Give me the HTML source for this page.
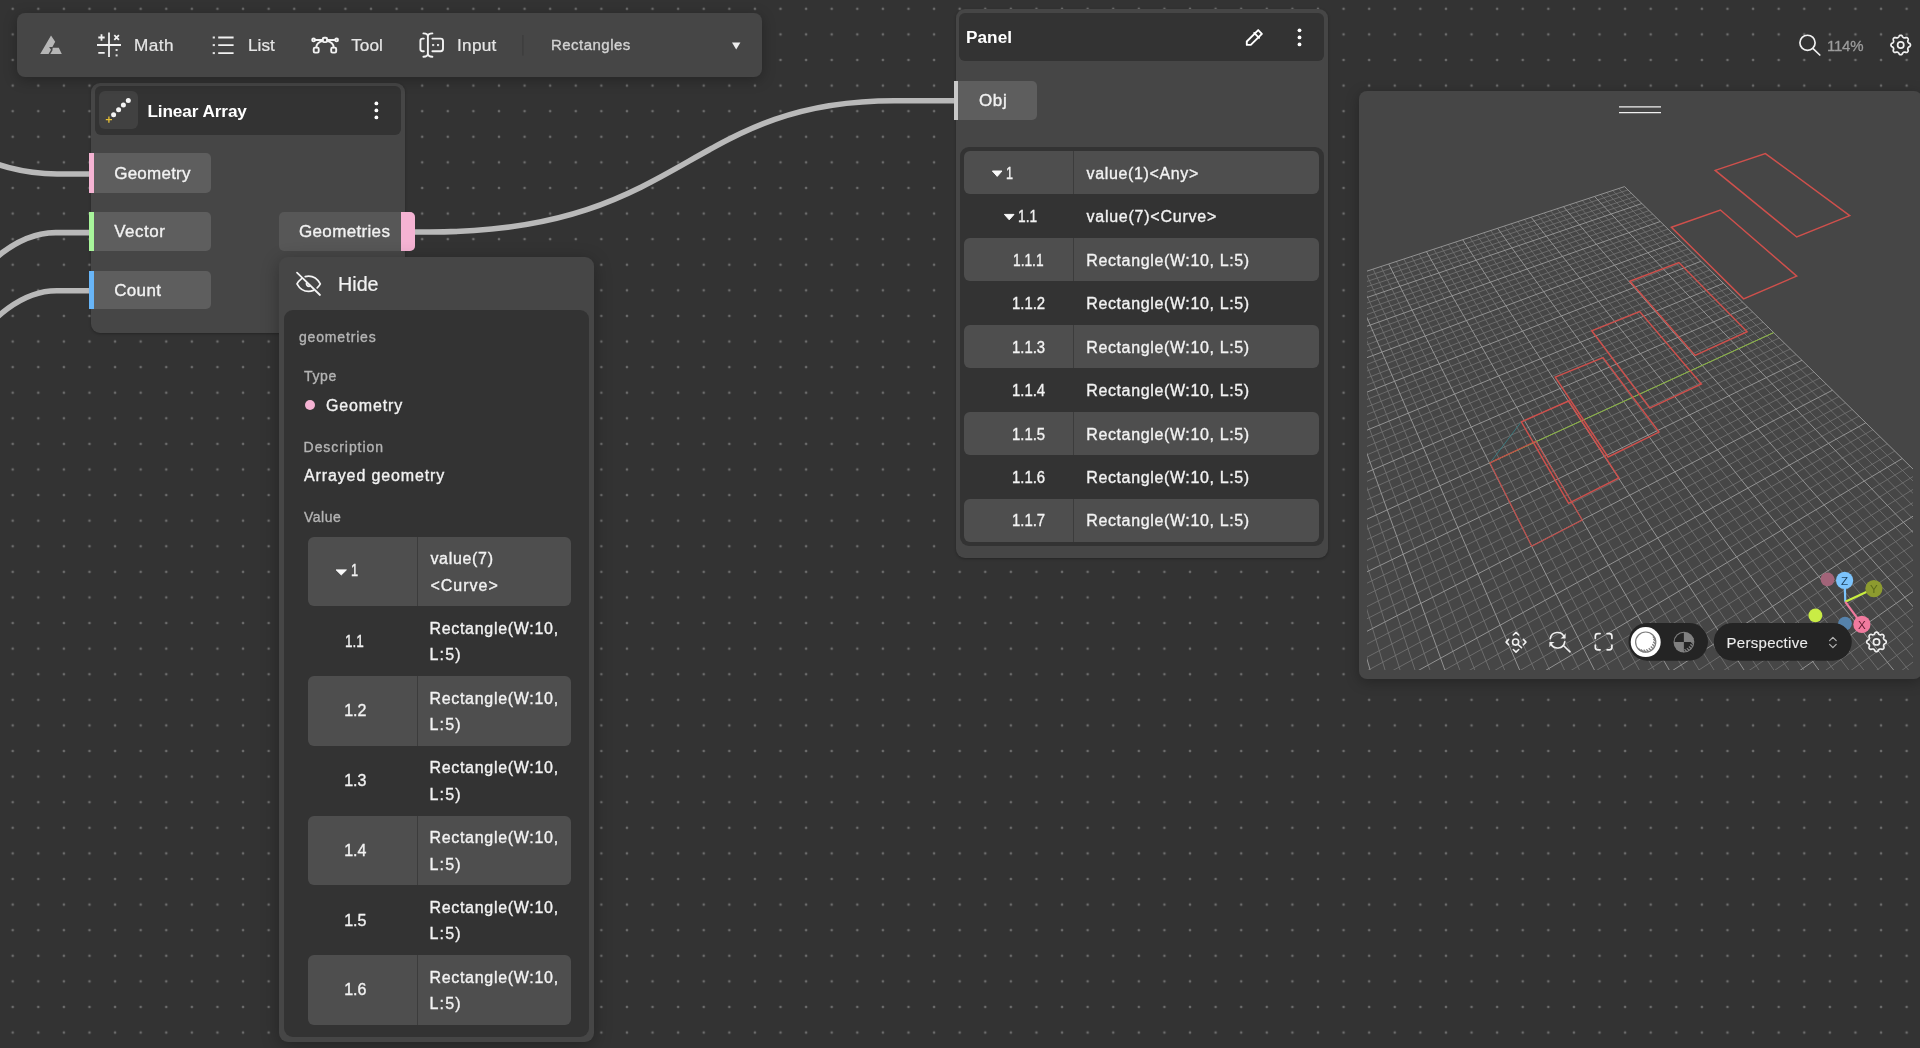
<!DOCTYPE html>
<html lang="en"><head><meta charset="utf-8"><title>Node editor</title>
<style>
html,body{margin:0;padding:0}
body{width:1920px;height:1048px;overflow:hidden;position:relative;background-color:#333333;
 background-image:radial-gradient(circle at 50% 50%, #6c6c6c 0, #6c6c6c 0.95px, rgba(108,108,108,0) 1.7px);
 background-size:25.6px 25.6px;background-position:-0.1px -4px;font-family:"Liberation Sans", sans-serif;}
.t{position:absolute;white-space:pre;line-height:1;font-family:"Liberation Sans", sans-serif;-webkit-text-stroke:0.35px currentColor;}
.abs{position:absolute}
.box{position:absolute;box-sizing:border-box}
.row{position:absolute;background:#4e4e4e;border-radius:6px}
.row i{position:absolute;top:0;bottom:0;width:1px;background:#3c3c3c}
svg{position:absolute;left:0;top:0;overflow:visible;will-change:transform}
</style></head><body>

<!-- wires -->
<svg width="1920" height="1048" viewBox="0 0 1920 1048" style="z-index:1">
 <g fill="none" stroke="#b9b9b9" stroke-width="5.6">
  <path d="M-40 148.6 Q 8.5 174 57 174 H92"/>
  <path d="M-40 297.1 Q 7.8 232.6 55.6 232.6 H92"/>
  <path d="M-40 360.6 Q 8.2 290.8 56.5 290.8 H92"/>
  <path d="M414 232 H429.8 C 685.6 232, 685.6 100.75, 894.3 100.75 H956"/>
 </g>
</svg>

<!-- top toolbar -->
<div class="box" style="left:17px;top:13px;width:745px;height:64px;border-radius:8px;background:#464646;box-shadow:0 3px 14px rgba(0,0,0,.28);z-index:5"></div>

<!-- node: Linear Array -->
<div class="box" style="left:91px;top:82.5px;width:313.8px;height:250.6px;border-radius:9px;background:#464646;box-shadow:0 1px 3px rgba(0,0,0,.28);z-index:2"></div>
<div class="box" style="left:94.8px;top:86.2px;width:306.2px;height:48.4px;border-radius:6px;background:#333333;z-index:2"></div>
<div class="box" style="left:99.2px;top:90.7px;width:38.6px;height:38.5px;border-radius:6px;background:#414141;z-index:2"></div>
<!-- ports -->
<div class="box" style="left:91px;top:153.3px;width:120px;height:39.6px;background:#5e5e5e;border-radius:0 5px 5px 0;z-index:3"></div>
<div class="box" style="left:89.1px;top:153.3px;width:5px;height:39.6px;background:#f5b3d3;z-index:3"></div>
<div class="box" style="left:91px;top:212px;width:120px;height:38.8px;background:#5e5e5e;border-radius:0 5px 5px 0;z-index:3"></div>
<div class="box" style="left:89.1px;top:212px;width:5px;height:38.8px;background:#a8f59b;z-index:3"></div>
<div class="box" style="left:91px;top:270.7px;width:120px;height:38.7px;background:#5e5e5e;border-radius:0 5px 5px 0;z-index:3"></div>
<div class="box" style="left:89.1px;top:270.7px;width:5px;height:38.7px;background:#68b5f7;z-index:3"></div>
<div class="box" style="left:279.4px;top:212px;width:135.8px;height:38.8px;background:#575757;border-radius:5px;z-index:3"></div>
<div class="box" style="left:401px;top:212px;width:14.2px;height:38.8px;background:#f5b3d3;border-radius:0 5px 5px 0;z-index:3"></div>

<!-- popover -->
<div class="box" style="left:279px;top:257.2px;width:314.7px;height:784.8px;border-radius:9px;background:#464646;box-shadow:0 4px 18px rgba(0,0,0,.3);z-index:6"></div>
<div class="box" style="left:283.8px;top:310.3px;width:305.7px;height:727.2px;border-radius:9px;background:#333333;z-index:6"></div>
<div class="box" style="left:304.5px;top:399.6px;width:10.1px;height:10.1px;border-radius:50%;background:#f5b3d3;z-index:7"></div>

<!-- panel -->
<div class="box" style="left:955.6px;top:9.2px;width:372px;height:549.2px;border-radius:9px;background:#464646;box-shadow:0 1px 3px rgba(0,0,0,.28);z-index:2"></div>
<div class="box" style="left:959.2px;top:12.6px;width:364.8px;height:48.8px;border-radius:6px;background:#333333;z-index:2"></div>
<div class="box" style="left:955px;top:80.6px;width:81.9px;height:39.1px;background:#5e5e5e;border-radius:0 5px 5px 0;z-index:3"></div>
<div class="box" style="left:953.7px;top:80.6px;width:4.7px;height:39.1px;background:#c9c9c9;z-index:3"></div>
<div class="box" style="left:959.5px;top:147px;width:364.7px;height:398.7px;border-radius:9px;background:#333333;z-index:2"></div>

<!-- viewport -->
<div class="box" style="left:1358.8px;top:90.8px;width:563.2px;height:588px;border-radius:8px;background:#464646;box-shadow:0 3px 14px rgba(0,0,0,.28);z-index:4"></div>
<svg width="1920" height="1048" viewBox="0 0 1920 1048" style="z-index:4">
 <defs><clipPath id="cv"><rect x="1367" y="99" width="546" height="571"/></clipPath></defs>
 <g clip-path="url(#cv)"><path d="M1073.4 373.3L1628.0 189.9M1083.9 364.0L1091.2 1309.3M1073.3 379.3L1631.4 193.3M1094.3 360.6L1115.1 1291.0M1073.3 385.4L1634.8 196.7M1104.5 357.2L1138.5 1273.1M1073.3 391.6L1638.3 200.1M1114.7 353.9L1161.4 1255.6M1073.2 404.4L1645.4 207.0M1134.8 347.3L1205.7 1221.8M1073.1 410.9L1649.1 210.6M1144.7 344.1L1227.1 1205.4M1073.1 417.6L1652.7 214.2M1154.5 340.8L1248.2 1189.3M1073.0 424.3L1656.5 217.8M1164.2 337.7L1268.7 1173.6M1072.9 438.2L1664.1 225.3M1183.3 331.4L1308.7 1143.1M1072.9 445.4L1667.9 229.1M1192.8 328.3L1328.1 1128.3M1072.8 452.6L1671.9 232.9M1202.2 325.2L1347.1 1113.7M1072.8 460.0L1675.8 236.8M1211.4 322.2L1365.7 1099.5M1072.7 475.3L1684.0 244.8M1229.7 316.1L1401.9 1071.9M1072.6 483.1L1688.1 248.8M1238.8 313.2L1419.5 1058.4M1072.6 491.1L1692.3 252.9M1247.7 310.3L1436.7 1045.2M1072.5 499.2L1696.6 257.1M1256.6 307.3L1453.7 1032.3M1072.4 516.0L1705.3 265.6M1274.1 301.6L1486.6 1007.1M1072.3 524.6L1709.7 270.0M1282.8 298.8L1502.7 994.9M1072.3 533.4L1714.2 274.4M1291.3 295.9L1518.4 982.8M1072.2 542.4L1718.8 278.8M1299.8 293.2L1533.9 971.0M1072.1 560.9L1728.1 288.0M1316.6 287.7L1564.0 948.0M1072.0 570.5L1732.9 292.6M1324.9 284.9L1578.7 936.8M1071.9 580.2L1737.7 297.4M1333.1 282.3L1593.1 925.8M1071.9 590.2L1742.6 302.2M1341.2 279.6L1607.2 915.0M1071.7 610.8L1752.7 312.0M1357.3 274.3L1634.9 893.8M1071.7 621.4L1757.8 317.1M1365.2 271.7L1648.4 883.5M1071.6 632.3L1763.0 322.2M1373.1 269.1L1661.6 873.4M1071.5 643.4L1768.3 327.4M1380.9 266.6L1674.7 863.5M1071.3 666.4L1779.2 338.0M1396.3 261.5L1700.1 844.0M1071.3 678.4L1784.7 343.4M1403.9 259.0L1712.5 834.5M1071.2 690.6L1790.4 348.9M1411.5 256.5L1724.8 825.2M1071.1 703.0L1796.1 354.6M1419.0 254.1L1736.8 816.0M1070.9 729.0L1807.8 366.1M1433.8 249.2L1760.3 798.0M1070.8 742.4L1813.9 372.0M1441.1 246.8L1771.8 789.2M1070.7 756.2L1820.0 377.9M1448.4 244.4L1783.1 780.6M1070.6 770.3L1826.2 384.0M1455.6 242.1L1794.3 772.1M1070.4 799.7L1839.0 396.5M1469.8 237.4L1816.1 755.4M1070.3 814.9L1845.5 402.9M1476.8 235.1L1826.7 747.3M1070.2 830.6L1852.2 409.5M1483.8 232.8L1837.2 739.3M1070.1 846.7L1858.9 416.1M1490.7 230.5L1847.6 731.3M1069.9 880.3L1872.9 429.7M1504.4 226.1L1867.8 715.9M1069.7 897.8L1880.0 436.7M1511.2 223.8L1877.7 708.3M1069.6 915.9L1887.3 443.8M1517.9 221.6L1887.5 700.8M1069.5 934.4L1894.7 451.1M1524.5 219.5L1897.1 693.5M1069.2 973.2L1909.9 466.0M1537.7 215.1L1916.0 679.1M1069.1 993.5L1917.7 473.7M1544.2 213.0L1925.3 672.0M1068.9 1014.4L1925.7 481.5M1550.7 210.9L1934.4 665.0M1068.8 1036.0L1933.9 489.4M1557.1 208.8L1943.4 658.2M1068.5 1081.2L1950.6 505.8M1569.8 204.6L1961.0 644.7M1068.3 1105.0L1959.2 514.3M1576.0 202.6L1969.6 638.1M1068.1 1129.6L1968.0 522.9M1582.3 200.5L1978.2 631.6M1067.9 1155.0L1977.0 531.6M1588.5 198.5L1986.6 625.1M1067.6 1208.5L1995.5 549.7M1600.7 194.5L2003.1 612.5M1067.4 1236.7L2005.0 559.1M1606.7 192.5L2011.2 606.4M1067.2 1266.0L2014.7 568.6M1612.7 190.5L2019.1 600.3M1067.0 1296.4L2024.7 578.3M1618.7 188.6L2027.0 594.2" stroke="#727272" stroke-width="0.85" fill="none"/><path d="M1073.4 367.4L1624.6 186.6M1073.4 367.4L1066.7 1327.9M1073.2 398.0L1641.9 203.5M1124.8 350.6L1183.7 1238.5M1073.0 431.2L1660.2 221.5M1173.8 334.5L1288.9 1158.2M1072.7 467.6L1679.9 240.8M1220.6 319.1L1384.0 1085.5M1072.4 507.5L1700.9 261.3M1265.4 304.5L1470.3 1019.6M1072.1 551.6L1723.4 283.4M1308.2 290.4L1549.1 959.4M1071.8 600.4L1747.6 307.1M1349.3 276.9L1621.2 904.3M1071.4 654.8L1773.7 332.6M1388.7 264.0L1687.5 853.7M1071.0 715.8L1801.9 360.3M1426.4 251.6L1748.7 806.9M1070.5 784.8L1832.5 390.2M1462.7 239.7L1805.3 763.7M1070.0 863.3L1865.8 422.8M1497.6 228.3L1857.8 723.6M1069.3 953.5L1902.2 458.5M1531.2 217.3L1906.6 686.2M1068.6 1058.2L1942.1 497.5M1563.5 206.7L1952.2 651.4M1067.8 1181.3L1986.1 540.6M1594.6 196.5L1994.9 618.8M1066.7 1327.9L2034.8 588.3M1624.6 186.6L2034.8 588.3" stroke="#979797" stroke-width="0.95" fill="none"/><line x1="1489.5" y1="463.0" x2="1773.7" y2="332.6" stroke="#88b63a" stroke-width="1"/><line x1="1490" y1="462.9" x2="1521.3" y2="421.8" stroke="#3b7f85" stroke-width="0.9"/><polygon points="1490.0,462.9 1535.6,441.3 1582.3,520.0 1531.8,546.2" fill="none" stroke="#c04d49" stroke-width="1.2"/><polygon points="1521.3,421.8 1568.6,401.0 1618.9,477.9 1568.6,503.4" fill="none" stroke="#cf504c" stroke-width="1.45"/><polygon points="1555.2,377.2 1603.0,357.6 1659.0,432.1 1608.1,457.0" fill="none" stroke="#cf504c" stroke-width="1.45"/><polygon points="1591.7,330.8 1639.7,311.6 1701.4,384.0 1649.8,408.1" fill="none" stroke="#cf504c" stroke-width="1.45"/><polygon points="1629.9,281.3 1678.9,262.5 1747.1,331.7 1695.1,355.4" fill="none" stroke="#cf504c" stroke-width="1.45"/><polygon points="1671.4,227.3 1720.4,210.0 1796.7,276.1 1743.6,298.8" fill="none" stroke="#cf504c" stroke-width="1.45"/><polygon points="1715.2,170.4 1765.4,153.6 1849.7,215.6 1796.7,237.0" fill="none" stroke="#cf504c" stroke-width="1.45"/></g>
 <path d="M1619 106.8H1661M1619 112.6H1661" stroke="#f0f0f0" stroke-width="1.3"/>
 <g stroke="#f0f0f0" stroke-width="1.6" fill="none" stroke-linecap="round" stroke-linejoin="round"><circle cx="1515.6" cy="642.1" r="3.05"/><path d="M1518 644.5L1521.5 647.7"/><path d="M1513.3 635L1516 632.4L1518.7 635M1513.3 649.5L1516 652.1L1518.7 649.5M1508.6 639.4L1506.1 642.1L1508.6 644.8M1523.4 639.4L1525.9 642.1L1523.4 644.8"/></g><g stroke="#f0f0f0" stroke-width="1.6" fill="none" stroke-linecap="round" stroke-linejoin="round"><path d="M1550.3 638.6A7.3 7.3 0 0 1 1564.3 637.2"/><path d="M1564.7 641.8A7.3 7.3 0 0 1 1550.7 643.4"/><path d="M1563.4 645.5L1570 651.8"/></g><g fill="#f0f0f0"><path d="M1565.6 633.2V638.4H1560.4L1563 636.6Z"/><path d="M1549.4 647.2V642H1554.6L1552 643.8Z"/></g><g stroke="#f0f0f0" stroke-width="1.7" fill="none" stroke-linecap="round" stroke-linejoin="round"><path d="M1595.3 638.4V636.2C1595.3 634.6 1596.3 633.6 1597.9 633.6H1600.1M1607.1 633.6H1609.3C1610.9 633.6 1611.9 634.6 1611.9 636.2V638.4M1611.9 645V647.2C1611.9 648.8 1610.9 649.8 1609.3 649.8H1607.1M1600.1 649.8H1597.9C1596.3 649.8 1595.3 648.8 1595.3 647.2V645"/></g><rect x="1628.5" y="622.9" width="79.5" height="37.8" rx="18.9" fill="#242424"/><circle cx="1645.7" cy="642.1" r="15" fill="#ffffff"/><circle cx="1645.7" cy="642.1" r="10.1" fill="none" stroke="#7c7c7c" stroke-width="1.2"/><path d="M1655.25 638.81L1652.87 636.44M1655.78 641.45L1653.40 639.07M1655.59 644.13L1653.22 641.75M1654.71 646.67L1652.33 644.29M1653.18 648.88L1650.81 646.51M1651.13 650.62L1648.75 648.24M1648.69 651.75L1646.31 649.37M1646.03 652.19L1643.66 649.82M1643.36 651.93L1640.98 649.55M1640.85 650.96L1638.47 648.58" stroke="#7c7c7c" stroke-width="1.3" fill="none"/><circle cx="1683.9" cy="642.1" r="10.4" fill="#808080"/><path d="M1683.9 642.1V632.8000000000001A9.3 9.3 0 0 0 1674.6000000000001 642.1Z" fill="#242424"/><path d="M1683.9 642.1V651.4A9.3 9.3 0 0 0 1693.2 642.1Z" fill="#242424"/><path d="M1693.36 638.84L1690.98 636.47M1693.88 641.45L1691.50 639.08M1693.70 644.11L1691.32 641.73M1692.82 646.62L1690.44 644.25M1691.31 648.82L1688.93 646.44M1689.27 650.53L1686.90 648.16M1686.86 651.65L1684.48 649.28M1684.23 652.09L1681.86 649.72M1681.58 651.83L1679.21 649.45M1679.10 650.87L1676.72 648.50" stroke="#808080" stroke-width="1.3" fill="none"/><circle cx="1827.5" cy="579.3" r="6.9" fill="#a26479"/><circle cx="1815.4" cy="615.3" r="6.9" fill="#c9ec45"/><circle cx="1845" cy="623.6" r="6.9" fill="#5582ab"/><path d="M1845.3 601.8L1844.6 580.4" stroke="#7cc3fb" stroke-width="2.2"/><path d="M1845.3 601.8L1873.9 588.6" stroke="#c9ee3f" stroke-width="2.2"/><path d="M1845.3 601.8L1861.9 624.4" stroke="#f07a9e" stroke-width="2.2"/><circle cx="1844.6" cy="580.4" r="8.6" fill="#7cc3fb"/><circle cx="1873.9" cy="588.6" r="8.6" fill="#8d9b2f"/><circle cx="1861.9" cy="624.4" r="8.6" fill="#f07a9e"/><g font-family="Liberation Sans, sans-serif" font-size="11.6" text-anchor="middle"><text x="1844.6" y="584.6" fill="#1d3f5c">Z</text><text x="1873.9" y="592.8" fill="#5c6a1c">Y</text><text x="1861.9" y="628.6" fill="#5e1c30">X</text></g><rect x="1713.8" y="622.9" width="138" height="37.9" rx="18.95" fill="#242424"/><path d="M1829.6 640.6L1832.9 637.4L1836.2 640.6M1829.6 644.4L1832.9 647.6L1836.2 644.4" stroke="#b0b0b0" stroke-width="1.3" fill="none" stroke-linecap="round" stroke-linejoin="round"/>
</svg>

<div style="position:absolute;left:0;top:0;width:1920px;height:1048px;z-index:8;will-change:transform">
<div class="row" style="left:307.9px;top:536.8px;width:263.1px;height:69.6px"><i style="left:109.2px"></i></div>
<div class="row" style="left:307.9px;top:676.2px;width:263.1px;height:69.6px"><i style="left:109.2px"></i></div>
<div class="row" style="left:307.9px;top:815.7px;width:263.1px;height:69.6px"><i style="left:109.2px"></i></div>
<div class="row" style="left:307.9px;top:955.1px;width:263.1px;height:69.6px"><i style="left:109.2px"></i></div>
<div class="row" style="left:963.6px;top:151.1px;width:355.4px;height:43.4px"><i style="left:109.6px"></i></div>
<div class="row" style="left:963.6px;top:237.9px;width:355.4px;height:43.4px"><i style="left:109.6px"></i></div>
<div class="row" style="left:963.6px;top:324.8px;width:355.4px;height:43.4px"><i style="left:109.6px"></i></div>
<div class="row" style="left:963.6px;top:411.6px;width:355.4px;height:43.4px"><i style="left:109.6px"></i></div>
<div class="row" style="left:963.6px;top:498.5px;width:355.4px;height:43.4px"><i style="left:109.6px"></i></div>
<span class="t" style="left:134.00px;top:37px;font-size:17.2px;color:#e6e6e6;font-weight:400;-webkit-text-stroke:0.22px currentColor;letter-spacing:0.483px">Math</span>
<span class="t" style="left:248.00px;top:37px;font-size:17.2px;color:#e6e6e6;font-weight:400;-webkit-text-stroke:0.22px currentColor;letter-spacing:0.010px">List</span>
<span class="t" style="left:351.20px;top:37px;font-size:17.2px;color:#e6e6e6;font-weight:400;-webkit-text-stroke:0.22px currentColor;letter-spacing:0.063px">Tool</span>
<span class="t" style="left:457.10px;top:37px;font-size:17.2px;color:#e6e6e6;font-weight:400;-webkit-text-stroke:0.22px currentColor;letter-spacing:0.237px">Input</span>
<span class="t" style="left:551.00px;top:37px;font-size:15.0px;color:#d2d2d2;font-weight:400;letter-spacing:0.473px">Rectangles</span>
<span class="t" style="left:147.40px;top:103px;font-size:17.2px;color:#ffffff;font-weight:700;-webkit-text-stroke:0;letter-spacing:-0.100px">Linear Array</span>
<span class="t" style="left:114.20px;top:165px;font-size:17.0px;color:#f2f2f2;font-weight:400;letter-spacing:0.238px">Geometry</span>
<span class="t" style="left:114.20px;top:223px;font-size:17.0px;color:#f2f2f2;font-weight:400;letter-spacing:0.493px">Vector</span>
<span class="t" style="left:114.20px;top:282px;font-size:17.0px;color:#f2f2f2;font-weight:400;letter-spacing:0.340px">Count</span>
<span class="t" style="left:299.00px;top:223px;font-size:17.0px;color:#f2f2f2;font-weight:400;letter-spacing:0.337px">Geometries</span>
<span class="t" style="left:337.64px;top:274px;font-size:20.6px;color:#f2f2f2;font-weight:400;-webkit-text-stroke:0.2px currentColor;letter-spacing:0.000px;transform:scaleX(0.9584);transform-origin:0 0">Hide</span>
<span class="t" style="left:299.00px;top:330px;font-size:14.0px;color:#b4b4b4;font-weight:400;letter-spacing:0.827px">geometries</span>
<span class="t" style="left:304.00px;top:369px;font-size:14.0px;color:#b4b4b4;font-weight:400;letter-spacing:0.612px">Type</span>
<span class="t" style="left:325.90px;top:398px;font-size:16.0px;color:#f2f2f2;font-weight:400;letter-spacing:0.865px">Geometry</span>
<span class="t" style="left:303.60px;top:440px;font-size:14.0px;color:#b4b4b4;font-weight:400;letter-spacing:0.936px">Description</span>
<span class="t" style="left:304.00px;top:468px;font-size:16.0px;color:#f2f2f2;font-weight:400;letter-spacing:0.876px">Arrayed geometry</span>
<span class="t" style="left:304.00px;top:510px;font-size:14.0px;color:#b4b4b4;font-weight:400;letter-spacing:0.505px">Value</span>
<span class="t" style="left:965.90px;top:29px;font-size:17.2px;color:#ffffff;font-weight:700;-webkit-text-stroke:0;letter-spacing:0.080px">Panel</span>
<span class="t" style="left:978.90px;top:92px;font-size:17.0px;color:#f2f2f2;font-weight:400;letter-spacing:0.711px">Obj</span>
<span class="t" style="left:1827.00px;top:38px;font-size:15.0px;color:#9c9c9c;font-weight:400;-webkit-text-stroke:0.3px currentColor;letter-spacing:-0.238px">114%</span>
<span class="t" style="left:1726.50px;top:635px;font-size:15.0px;color:#ececec;font-weight:400;-webkit-text-stroke:0.12px currentColor;letter-spacing:0.297px">Perspective</span>
<span class="t" style="left:350.80px;top:563px;font-size:16.0px;color:#f2f2f2;font-weight:400;letter-spacing:0.000px;transform:scaleX(0.8000);transform-origin:0 0">1</span>
<span class="t" style="left:430.40px;top:551px;font-size:16.0px;color:#f2f2f2;font-weight:400;letter-spacing:0.689px">value(7)</span>
<span class="t" style="left:430.40px;top:578px;font-size:16.0px;color:#f2f2f2;font-weight:400;letter-spacing:0.996px">&lt;Curve&gt;</span>
<span class="t" style="left:345.16px;top:634px;font-size:16.0px;color:#f2f2f2;font-weight:400;letter-spacing:0.000px;transform:scaleX(0.8433);transform-origin:0 0">1.1</span>
<span class="t" style="left:429.40px;top:621px;font-size:16.0px;color:#f2f2f2;font-weight:400;letter-spacing:0.705px">Rectangle(W:10,</span>
<span class="t" style="left:429.40px;top:647px;font-size:16.0px;color:#f2f2f2;font-weight:400;letter-spacing:1.219px">L:5)</span>
<span class="t" style="left:344.20px;top:703px;font-size:16.0px;color:#f2f2f2;font-weight:400;letter-spacing:-0.072px">1.2</span>
<span class="t" style="left:429.40px;top:691px;font-size:16.0px;color:#f2f2f2;font-weight:400;letter-spacing:0.705px">Rectangle(W:10,</span>
<span class="t" style="left:429.40px;top:717px;font-size:16.0px;color:#f2f2f2;font-weight:400;letter-spacing:1.219px">L:5)</span>
<span class="t" style="left:344.20px;top:773px;font-size:16.0px;color:#f2f2f2;font-weight:400;letter-spacing:-0.072px">1.3</span>
<span class="t" style="left:429.40px;top:760px;font-size:16.0px;color:#f2f2f2;font-weight:400;letter-spacing:0.705px">Rectangle(W:10,</span>
<span class="t" style="left:429.40px;top:787px;font-size:16.0px;color:#f2f2f2;font-weight:400;letter-spacing:1.219px">L:5)</span>
<span class="t" style="left:344.20px;top:843px;font-size:16.0px;color:#f2f2f2;font-weight:400;letter-spacing:-0.072px">1.4</span>
<span class="t" style="left:429.40px;top:830px;font-size:16.0px;color:#f2f2f2;font-weight:400;letter-spacing:0.705px">Rectangle(W:10,</span>
<span class="t" style="left:429.40px;top:857px;font-size:16.0px;color:#f2f2f2;font-weight:400;letter-spacing:1.219px">L:5)</span>
<span class="t" style="left:344.20px;top:913px;font-size:16.0px;color:#f2f2f2;font-weight:400;letter-spacing:-0.072px">1.5</span>
<span class="t" style="left:429.40px;top:900px;font-size:16.0px;color:#f2f2f2;font-weight:400;letter-spacing:0.705px">Rectangle(W:10,</span>
<span class="t" style="left:429.40px;top:926px;font-size:16.0px;color:#f2f2f2;font-weight:400;letter-spacing:1.219px">L:5)</span>
<span class="t" style="left:344.20px;top:982px;font-size:16.0px;color:#f2f2f2;font-weight:400;letter-spacing:-0.072px">1.6</span>
<span class="t" style="left:429.40px;top:970px;font-size:16.0px;color:#f2f2f2;font-weight:400;letter-spacing:0.705px">Rectangle(W:10,</span>
<span class="t" style="left:429.40px;top:996px;font-size:16.0px;color:#f2f2f2;font-weight:400;letter-spacing:1.219px">L:5)</span>
<span class="t" style="left:1006.21px;top:166px;font-size:16.0px;color:#f2f2f2;font-weight:400;letter-spacing:0.000px;transform:scaleX(0.7875);transform-origin:0 0">1</span>
<span class="t" style="left:1086.50px;top:166px;font-size:16.0px;color:#f2f2f2;font-weight:400;letter-spacing:0.648px">value(1)&lt;Any&gt;</span>
<span class="t" style="left:1018.14px;top:209px;font-size:16.0px;color:#f2f2f2;font-weight:400;letter-spacing:0.000px;transform:scaleX(0.8574);transform-origin:0 0">1.1</span>
<span class="t" style="left:1086.50px;top:209px;font-size:16.0px;color:#f2f2f2;font-weight:400;letter-spacing:0.755px">value(7)&lt;Curve&gt;</span>
<span class="t" style="left:1012.54px;top:253px;font-size:16.0px;color:#f2f2f2;font-weight:400;letter-spacing:0.000px;transform:scaleX(0.8591);transform-origin:0 0">1.1.1</span>
<span class="t" style="left:1086.20px;top:253px;font-size:16.0px;color:#f2f2f2;font-weight:400;letter-spacing:0.634px">Rectangle(W:10, L:5)</span>
<span class="t" style="left:1012.47px;top:296px;font-size:16.0px;color:#f2f2f2;font-weight:400;letter-spacing:0.000px;transform:scaleX(0.9312);transform-origin:0 0">1.1.2</span>
<span class="t" style="left:1086.20px;top:296px;font-size:16.0px;color:#f2f2f2;font-weight:400;letter-spacing:0.634px">Rectangle(W:10, L:5)</span>
<span class="t" style="left:1012.47px;top:340px;font-size:16.0px;color:#f2f2f2;font-weight:400;letter-spacing:0.000px;transform:scaleX(0.9312);transform-origin:0 0">1.1.3</span>
<span class="t" style="left:1086.20px;top:340px;font-size:16.0px;color:#f2f2f2;font-weight:400;letter-spacing:0.634px">Rectangle(W:10, L:5)</span>
<span class="t" style="left:1012.47px;top:383px;font-size:16.0px;color:#f2f2f2;font-weight:400;letter-spacing:0.000px;transform:scaleX(0.9312);transform-origin:0 0">1.1.4</span>
<span class="t" style="left:1086.20px;top:383px;font-size:16.0px;color:#f2f2f2;font-weight:400;letter-spacing:0.634px">Rectangle(W:10, L:5)</span>
<span class="t" style="left:1012.47px;top:427px;font-size:16.0px;color:#f2f2f2;font-weight:400;letter-spacing:0.000px;transform:scaleX(0.9312);transform-origin:0 0">1.1.5</span>
<span class="t" style="left:1086.20px;top:427px;font-size:16.0px;color:#f2f2f2;font-weight:400;letter-spacing:0.634px">Rectangle(W:10, L:5)</span>
<span class="t" style="left:1012.47px;top:470px;font-size:16.0px;color:#f2f2f2;font-weight:400;letter-spacing:0.000px;transform:scaleX(0.9312);transform-origin:0 0">1.1.6</span>
<span class="t" style="left:1086.20px;top:470px;font-size:16.0px;color:#f2f2f2;font-weight:400;letter-spacing:0.634px">Rectangle(W:10, L:5)</span>
<span class="t" style="left:1012.47px;top:513px;font-size:16.0px;color:#f2f2f2;font-weight:400;letter-spacing:0.000px;transform:scaleX(0.9312);transform-origin:0 0">1.1.7</span>
<span class="t" style="left:1086.20px;top:513px;font-size:16.0px;color:#f2f2f2;font-weight:400;letter-spacing:0.634px">Rectangle(W:10, L:5)</span>
</div>

<!-- icons -->
<svg width="1920" height="1048" viewBox="0 0 1920 1048" style="z-index:9">
 <g fill="#b6b6b6"><path d="M51 35.5L55.2 41.7L52.4 46.9H49.1L51 49.8L48.5 53.9H40.2Z"/><path d="M52.7 47.7H58.8L61.8 53.9H50.3L52.4 50.4Z"/></g><g stroke="#f2f2f2" stroke-width="1.8" fill="none"><path d="M109 32.6V57.1M97 45H121M98.3 37.5H104.7M101.5 34.3V40.7M114.3 35.2L118.9 39.8M118.9 35.2L114.3 39.8M98.3 52.8H104.7"/></g><g fill="#e2e2e2"><rect x="115.6" y="49" width="2" height="2"/><rect x="115.6" y="54.4" width="2" height="2"/></g><g stroke="#f2f2f2" stroke-width="1.8" fill="none"><path d="M218.2 37.5H233.6M218.2 45.1H233.6M218.2 53.1H233.6"/></g><g fill="#e2e2e2"><rect x="212.7" y="36.5" width="2.2" height="2"/><rect x="212.7" y="44.1" width="2.2" height="2"/><rect x="212.7" y="52.1" width="2.2" height="2"/></g><g stroke="#f2f2f2" stroke-width="1.9" fill="none" stroke-linecap="round"><rect x="322.8" y="37.8" width="4.3" height="4.3" rx="1.2"/><circle cx="313.6" cy="39.95" r="1.4"/><circle cx="336.6" cy="39.95" r="1.4"/><path d="M315.2 39.95H322.6M327.3 39.95H335"/><rect x="313.7" y="47.6" width="5" height="5" rx="1.3"/><rect x="331.2" y="47.6" width="5" height="5" rx="1.3"/><path d="M322.6 40.9C318.8 42 316.4 44.2 316.3 47.4M327.4 40.9C331.2 42 333.6 44.2 333.7 47.4"/></g><g stroke="#f2f2f2" stroke-width="1.9" fill="none" stroke-linecap="round" stroke-linejoin="round"><path d="M423.4 33.4C425.8 33.4 427.9 34.6 427.9 36.6V53.5C427.9 55.5 425.8 56.7 423.4 56.7M432.4 33.4C430 33.4 427.9 34.6 427.9 36.6M427.9 53.5C427.9 55.5 430 56.7 432.4 56.7"/><path d="M423.8 38.6H422.6C421.3 38.6 420.4 39.5 420.4 40.8V49C420.4 50.3 421.3 51.2 422.6 51.2H423.8"/><path d="M432.4 38.6H440.6C442 38.6 443 39.6 443 41V48.8C443 50.2 442 51.2 440.6 51.2H432.4"/></g><g fill="#dcdcdc"><rect x="432.1" y="44" width="2.1" height="2.1"/><rect x="437" y="44" width="2.1" height="2.1"/></g><path d="M522.9 35V55.6" stroke="#3b3b3b" stroke-width="1.2"/><path d="M732 42.4H740.4L736.2 49.5Z" fill="#ededed"/><g fill="#f4f4f4"><circle cx="128.3" cy="100.4" r="2.5"/><circle cx="123.4" cy="105.1" r="2.5"/><circle cx="118.6" cy="109.8" r="2.5"/><circle cx="113.6" cy="114.8" r="2.5"/></g><path d="M105.8 119.7H112M108.9 116.6V122.8" stroke="#e6bf35" stroke-width="1.3" fill="none"/><g fill="#ffffff"><circle cx="376.4" cy="103.4" r="1.9"/><circle cx="376.4" cy="110.4" r="1.9"/><circle cx="376.4" cy="117.4" r="1.9"/><circle cx="1299.5" cy="30.3" r="1.9"/><circle cx="1299.5" cy="37.4" r="1.9"/><circle cx="1299.5" cy="44.4" r="1.9"/></g><g stroke="#ffffff" stroke-width="1.9" fill="none" stroke-linejoin="round" stroke-linecap="round"><path d="M1258.2 30.1L1261.9 33.8L1250.8 44.9L1246.8 44.9L1246.8 41.5Z"/><path d="M1254.2 32.9L1259.1 37.8"/></g><g stroke="#f0f0f0" stroke-width="1.7" fill="none" stroke-linecap="round"><circle cx="1807.5" cy="42.85" r="7.6"/><path d="M1813.1 48.7L1819.8 55"/></g><path d="M336.2 569.9H346.4L341.3 574.9Z" fill="#fafafa" stroke="#fafafa" stroke-width="1" stroke-linejoin="round"/><path d="M992.4 171.0H1002.0L997.2 176.4Z" fill="#fafafa" stroke="#fafafa" stroke-width="1" stroke-linejoin="round"/><path d="M1004.4 214.4H1014.0L1009.2 219.8Z" fill="#fafafa" stroke="#fafafa" stroke-width="1" stroke-linejoin="round"/><g stroke="#f4f4f4" stroke-width="1.75" fill="none" stroke-linecap="round" stroke-linejoin="round"><path d="M297 272.6L320 295"/><path d="M301.6 278.6C299.6 280.2 298 282 297 283.8C299.4 288.2 303.6 291.4 308.6 291.4C310.4 291.4 312 291 313.4 290.4"/><path d="M305.2 276.6C306.3 276.3 307.4 276.1 308.6 276.1C313.6 276.1 317.8 279.3 320.3 283.8C319.5 285.3 318.4 286.7 317.2 287.9"/><path d="M306.5 283.2C306.3 284.8 307.4 286.3 309.2 286.4"/></g>
 <path d="M1900.70 35.25L1901.04 35.28L1901.37 35.37L1901.70 35.52L1902.00 35.74L1902.28 36.03L1902.48 36.61L1902.71 36.95L1902.93 37.21L1903.16 37.42L1903.40 37.59L1903.64 37.72L1903.90 37.82L1904.17 37.88L1904.47 37.91L1904.80 37.90L1905.16 37.86L1905.68 37.62L1906.13 37.52L1906.52 37.55L1906.87 37.65L1907.19 37.79L1907.47 37.99L1907.71 38.23L1907.91 38.51L1908.05 38.83L1908.15 39.18L1908.18 39.57L1908.08 40.02L1907.84 40.54L1907.80 40.90L1907.79 41.23L1907.82 41.53L1907.88 41.80L1907.98 42.06L1908.11 42.30L1908.28 42.54L1908.49 42.77L1908.75 42.99L1909.09 43.22L1909.67 43.42L1909.96 43.70L1910.18 44.00L1910.33 44.33L1910.42 44.66L1910.45 45.00L1910.42 45.34L1910.33 45.67L1910.18 46.00L1909.96 46.30L1909.67 46.58L1909.09 46.78L1908.75 47.01L1908.49 47.23L1908.28 47.46L1908.11 47.70L1907.98 47.94L1907.88 48.20L1907.82 48.47L1907.79 48.77L1907.80 49.10L1907.84 49.46L1908.08 49.98L1908.18 50.43L1908.15 50.82L1908.05 51.17L1907.91 51.49L1907.71 51.77L1907.47 52.01L1907.19 52.21L1906.87 52.35L1906.52 52.45L1906.13 52.48L1905.68 52.38L1905.16 52.14L1904.80 52.10L1904.47 52.09L1904.17 52.12L1903.90 52.18L1903.64 52.28L1903.40 52.41L1903.16 52.58L1902.93 52.79L1902.71 53.05L1902.48 53.39L1902.28 53.97L1902.00 54.26L1901.70 54.48L1901.37 54.63L1901.04 54.72L1900.70 54.75L1900.36 54.72L1900.03 54.63L1899.70 54.48L1899.40 54.26L1899.12 53.97L1898.92 53.39L1898.69 53.05L1898.47 52.79L1898.24 52.58L1898.00 52.41L1897.76 52.28L1897.50 52.18L1897.23 52.12L1896.93 52.09L1896.60 52.10L1896.24 52.14L1895.72 52.38L1895.27 52.48L1894.88 52.45L1894.53 52.35L1894.21 52.21L1893.93 52.01L1893.69 51.77L1893.49 51.49L1893.35 51.17L1893.25 50.82L1893.22 50.43L1893.32 49.98L1893.56 49.46L1893.60 49.10L1893.61 48.77L1893.58 48.47L1893.52 48.20L1893.42 47.94L1893.29 47.70L1893.12 47.46L1892.91 47.23L1892.65 47.01L1892.31 46.78L1891.73 46.58L1891.44 46.30L1891.22 46.00L1891.07 45.67L1890.98 45.34L1890.95 45.00L1890.98 44.66L1891.07 44.33L1891.22 44.00L1891.44 43.70L1891.73 43.42L1892.31 43.22L1892.65 42.99L1892.91 42.77L1893.12 42.54L1893.29 42.30L1893.42 42.06L1893.52 41.80L1893.58 41.53L1893.61 41.23L1893.60 40.90L1893.56 40.54L1893.32 40.02L1893.22 39.57L1893.25 39.18L1893.35 38.83L1893.49 38.51L1893.69 38.23L1893.93 37.99L1894.21 37.79L1894.53 37.65L1894.88 37.55L1895.27 37.52L1895.72 37.62L1896.24 37.86L1896.60 37.90L1896.93 37.91L1897.23 37.88L1897.50 37.82L1897.76 37.72L1898.00 37.59L1898.24 37.42L1898.47 37.21L1898.69 36.95L1898.92 36.61L1899.12 36.03L1899.40 35.74L1899.70 35.52L1900.03 35.37L1900.36 35.28Z" fill="none" stroke="#f0f0f0" stroke-width="1.7" stroke-linejoin="round"/><circle cx="1900.7" cy="45.0" r="3.1" fill="none" stroke="#f0f0f0" stroke-width="1.7"/>
 <path d="M1876.50 632.15L1876.84 632.18L1877.17 632.27L1877.50 632.42L1877.80 632.64L1878.08 632.93L1878.28 633.51L1878.51 633.85L1878.73 634.11L1878.96 634.32L1879.20 634.49L1879.44 634.62L1879.70 634.72L1879.97 634.78L1880.27 634.81L1880.60 634.80L1880.96 634.76L1881.48 634.52L1881.93 634.42L1882.32 634.45L1882.67 634.55L1882.99 634.69L1883.27 634.89L1883.51 635.13L1883.71 635.41L1883.85 635.73L1883.95 636.08L1883.98 636.47L1883.88 636.92L1883.64 637.44L1883.60 637.80L1883.59 638.13L1883.62 638.43L1883.68 638.70L1883.78 638.96L1883.91 639.20L1884.08 639.44L1884.29 639.67L1884.55 639.89L1884.89 640.12L1885.47 640.32L1885.76 640.60L1885.98 640.90L1886.13 641.23L1886.22 641.56L1886.25 641.90L1886.22 642.24L1886.13 642.57L1885.98 642.90L1885.76 643.20L1885.47 643.48L1884.89 643.68L1884.55 643.91L1884.29 644.13L1884.08 644.36L1883.91 644.60L1883.78 644.84L1883.68 645.10L1883.62 645.37L1883.59 645.67L1883.60 646.00L1883.64 646.36L1883.88 646.88L1883.98 647.33L1883.95 647.72L1883.85 648.07L1883.71 648.39L1883.51 648.67L1883.27 648.91L1882.99 649.11L1882.67 649.25L1882.32 649.35L1881.93 649.38L1881.48 649.28L1880.96 649.04L1880.60 649.00L1880.27 648.99L1879.97 649.02L1879.70 649.08L1879.44 649.18L1879.20 649.31L1878.96 649.48L1878.73 649.69L1878.51 649.95L1878.28 650.29L1878.08 650.87L1877.80 651.16L1877.50 651.38L1877.17 651.53L1876.84 651.62L1876.50 651.65L1876.16 651.62L1875.83 651.53L1875.50 651.38L1875.20 651.16L1874.92 650.87L1874.72 650.29L1874.49 649.95L1874.27 649.69L1874.04 649.48L1873.80 649.31L1873.56 649.18L1873.30 649.08L1873.03 649.02L1872.73 648.99L1872.40 649.00L1872.04 649.04L1871.52 649.28L1871.07 649.38L1870.68 649.35L1870.33 649.25L1870.01 649.11L1869.73 648.91L1869.49 648.67L1869.29 648.39L1869.15 648.07L1869.05 647.72L1869.02 647.33L1869.12 646.88L1869.36 646.36L1869.40 646.00L1869.41 645.67L1869.38 645.37L1869.32 645.10L1869.22 644.84L1869.09 644.60L1868.92 644.36L1868.71 644.13L1868.45 643.91L1868.11 643.68L1867.53 643.48L1867.24 643.20L1867.02 642.90L1866.87 642.57L1866.78 642.24L1866.75 641.90L1866.78 641.56L1866.87 641.23L1867.02 640.90L1867.24 640.60L1867.53 640.32L1868.11 640.12L1868.45 639.89L1868.71 639.67L1868.92 639.44L1869.09 639.20L1869.22 638.96L1869.32 638.70L1869.38 638.43L1869.41 638.13L1869.40 637.80L1869.36 637.44L1869.12 636.92L1869.02 636.47L1869.05 636.08L1869.15 635.73L1869.29 635.41L1869.49 635.13L1869.73 634.89L1870.01 634.69L1870.33 634.55L1870.68 634.45L1871.07 634.42L1871.52 634.52L1872.04 634.76L1872.40 634.80L1872.73 634.81L1873.03 634.78L1873.30 634.72L1873.56 634.62L1873.80 634.49L1874.04 634.32L1874.27 634.11L1874.49 633.85L1874.72 633.51L1874.92 632.93L1875.20 632.64L1875.50 632.42L1875.83 632.27L1876.16 632.18Z" fill="none" stroke="#f0f0f0" stroke-width="1.7" stroke-linejoin="round"/><circle cx="1876.5" cy="641.9" r="3.1" fill="none" stroke="#f0f0f0" stroke-width="1.7"/>
</svg>
</body></html>
